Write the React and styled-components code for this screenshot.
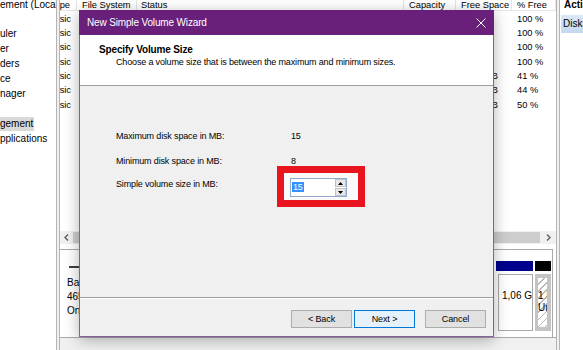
import React from 'react';
import styled, { createGlobalStyle } from 'styled-components';

const GlobalStyle = createGlobalStyle`
  html, body {
    margin: 0;
    padding: 0;
  }
  body {
    width: 583px;
    height: 350px;
    overflow: hidden;
    background: #fff;
    font-family: "Liberation Sans", Arial, sans-serif;
  }
`;

const treeItems = [
  { text: 'ement (Local' },
  { text: '' },
  { text: 'uler' },
  { text: 'er' },
  { text: 'ders' },
  { text: 'ce' },
  { text: 'nager' },
  { text: '' },
  { text: 'gement', selected: true },
  { text: 'pplications' },
];

const columns = [
  { key: 'type', title: 'Type', width: 17, align: 'end', pl: 0, pr: 6 },
  { key: 'fs', title: 'File System', width: 60, pl: 5 },
  { key: 'status', title: 'Status', width: 267, pl: 4 },
  { key: 'capacity', title: 'Capacity', width: 52, pl: 5 },
  { key: 'free', title: 'Free Space', width: 56, pl: 5 },
  { key: 'pct', title: '% Free', width: 44, pl: 5 },
];

const volumes = [
  { type: 'Basic', fs: 'NTFS', status: 'Healthy (System, Active, Primary Partition)', capacity: '500 MB', free: '', pct: '100 %' },
  { type: 'Basic', fs: 'NTFS', status: 'Healthy (Primary Partition)', capacity: '450 MB', free: '', pct: '100 %' },
  { type: 'Basic', fs: 'NTFS', status: 'Healthy (Primary Partition)', capacity: '8 MB', free: '', pct: '100 %' },
  { type: 'Basic', fs: 'NTFS', status: 'Healthy (Primary Partition)', capacity: '15 MB', free: '', pct: '100 %' },
  { type: 'Basic', fs: 'NTFS', status: 'Healthy (Boot, Page File, Crash Dump, Primary Partition)', capacity: '97,66 GB', free: '40,12 GB', pct: '41 %' },
  { type: 'Basic', fs: 'NTFS', status: 'Healthy (Primary Partition)', capacity: '183,59 GB', free: '80,90 GB', pct: '44 %' },
  { type: 'Basic', fs: 'NTFS', status: 'Healthy (Primary Partition)', capacity: '183,59 GB', free: '91,80 GB', pct: '50 %' },
];

/* ---------- background console ---------- */

const Screen = styled.div`
  position: relative;
  display: flex;
  width: 583px;
  height: 350px;
  overflow: hidden;
  background: #fff;
  color: #000;
`;

const Tree = styled.div`
  flex: 0 0 57px;
  box-sizing: border-box;
  border-right: 1px solid #b4b4b4;
  overflow: hidden;
  font-size: 10px;
`;

const TreeList = styled.div`
  margin-top: -2.45px;
`;

const TreeItem = styled.div`
  height: 14.9px;
  line-height: 14.9px;
  white-space: nowrap;
`;

const TreeLabel = styled.span`
  display: inline-block;
  line-height: 14.3px;
  padding-right: 1px;
  background: ${p => (p.$selected ? '#d9d9d9' : 'transparent')};
`;

const Splitter = styled.div`
  flex: 0 0 2px;
  background: #f0f0f0;
`;

const Middle = styled.div`
  flex: 0 0 498px;
  box-sizing: border-box;
  border-left: 1px solid #b4b4b4;
  border-right: 1px solid #b4b4b4;
  display: flex;
  flex-direction: column;
  font-size: 9.3px;
`;

const HeaderRow = styled.div`
  display: flex;
  height: 11px;
  box-sizing: border-box;
  border-bottom: 1px solid #e5e5e5;
  line-height: 10px;
`;

const Cell = styled.div`
  flex: 0 0 ${p => p.$w}px;
  box-sizing: border-box;
  display: flex;
  justify-content: ${p => (p.$align === 'end' ? 'flex-end' : 'flex-start')};
  padding: 0 ${p => p.$pr || 0}px 0 ${p => p.$pl || 0}px;
  overflow: hidden;
  white-space: nowrap;
`;

const HeaderCell = styled(Cell)`
  border-right: 1px solid #e5e5e5;
`;

const Rows = styled.div`
  height: 220px;
  padding-top: 0.6px;
  box-sizing: border-box;
  overflow: hidden;
`;

const Row = styled.div`
  display: flex;
  height: 14.33px;
  line-height: 14.33px;
`;

const HScroll = styled.div`
  display: flex;
  height: 13px;
  background: #f0f0f0;
`;

const ScrollArrow = styled.div`
  flex: 0 0 ${p => p.$w}px;
  display: flex;
  align-items: center;
  justify-content: center;
`;

const ScrollThumb = styled.div`
  flex: 1;
  margin: 1px 0;
  background: #cdcdcd;
`;

const PaneGap = styled.div`
  height: 5px;
`;

const LowerPane = styled.div`
  height: 88px;
  box-sizing: border-box;
  margin-right: 3px;
  border-top: 1px solid #a9a9a9;
  border-right: 1px solid #a9a9a9;
  padding-top: 11px;
  display: flex;
  font-size: 10px;
`;

const DiskLabel = styled.div`
  flex: 0 0 70px;
  box-sizing: border-box;
  padding: 5px 0 0 7px;
`;

const DiskIcon = styled.div`
  width: 11px;
  height: 2px;
  margin-left: 2px;
  background: #404040;
`;

const DiskLines = styled.div`
  margin-top: 8px;
  line-height: 14px;
  white-space: nowrap;
  overflow: hidden;
`;

const Partitions = styled.div`
  flex: 1;
  min-width: 0;
  display: flex;
  gap: 2px;
  padding-right: 1px;
`;

const Partition = styled.div`
  flex: ${p => (p.$w ? `0 0 ${p.$w}px` : '1 1 0')};
  min-width: 0;
  overflow: hidden;
  display: flex;
  flex-direction: column;
`;

const PartitionBar = styled.div`
  height: 10px;
  flex-shrink: 0;
  background: ${p => p.$color};
`;

const PartitionBody = styled.div`
  height: 57px;
  margin-top: 3px;
  box-sizing: border-box;
  overflow: hidden;
  white-space: nowrap;
  line-height: 12px;
  border: ${p => (p.$unallocated ? '4px solid #c4c4c4' : '1px solid #a8a8a8')};
  border-left-width: ${p => (p.$unallocated ? 3 : 1)}px;
  margin-left: ${p => (p.$unallocated ? 0 : 2)}px;
  padding: ${p => (p.$unallocated ? '12px 0 0 0' : '15px 0 0 3px')};
  background: ${p =>
    p.$unallocated
      ? 'repeating-linear-gradient(135deg, #fff 0 4px, #b8b8b8 4px 5px)'
      : '#fff'};
`;

const Legend = styled.div`
  flex: 1;
  border-top: 1px solid #a9a9a9;
  background: #f0f0f0;
`;

const ActionPanel = styled.div`
  flex: 0 0 24px;
  box-sizing: border-box;
  border-left: 1px solid #b4b4b4;
  overflow: hidden;
  font-size: 10px;
  white-space: nowrap;
`;

const ActionHeader = styled.div`
  height: 11px;
  line-height: 10px;
  padding-left: 4px;
  font-weight: bold;
`;

const ActionItem = styled.div`
  margin: 4px 0 0 1px;
  height: 18px;
  line-height: 18px;
  padding-left: 2px;
  background: linear-gradient(#dbe8f6, #c3d8ef);
`;

/* ---------- wizard dialog ---------- */

const Dialog = styled.div`
  position: absolute;
  left: 79px;
  top: 10px;
  width: 415px;
  height: 327px;
  box-sizing: border-box;
  border: 1px solid #86609a;
  border-top: none;
  display: flex;
  flex-direction: column;
  background: #f0f0f0;
  box-shadow: 0 3px 14px rgba(0, 0, 0, 0.3);
  color: #000;
`;

const TitleBar = styled.div`
  height: 25px;
  flex-shrink: 0;
  margin: 0 -1px;
  display: flex;
  align-items: center;
  justify-content: space-between;
  padding: 0 8px 0 8px;
  background: #69207b;
  color: #fff;
  font-size: 10px;
  letter-spacing: -0.15px;
`;

const WizardHeader = styled.div`
  height: 51px;
  flex-shrink: 0;
  box-sizing: border-box;
  border-bottom: 1px solid #a0a0a0;
  background: #fff;
  padding: 9px 0 0 19px;
  line-height: 12px;
`;

const HeaderTitle = styled.div`
  font-size: 10px;
  font-weight: bold;
  letter-spacing: -0.15px;
`;

const HeaderText = styled.div`
  margin-left: 17px;
  font-size: 9px;
  letter-spacing: -0.16px;
`;

const WizardBody = styled.div`
  height: 211px;
  flex-shrink: 0;
  box-sizing: border-box;
  padding: 44px 0 0 36px;
  display: flex;
  flex-direction: column;
  font-size: 9px;
  letter-spacing: -0.15px;
`;

const InfoRow = styled.div`
  display: grid;
  grid-template-columns: 161px auto;
  align-items: start;
  height: ${p => p.$h}px;
  margin-top: ${p => p.$mt}px;
  line-height: 12px;
`;

const InfoLabel = styled.div`
  padding-top: ${p => p.$pt || 0}px;
`;

const InfoValue = styled.div`
  padding-left: 14px;
`;

const Highlight = styled.div`
  justify-self: start;
  border: 7px solid #e8141e;
  background: #fafafa;
  padding: 5px 11px 3px 6px;
`;

const SpinBox = styled.div`
  display: flex;
  width: 57px;
  height: 19px;
  box-sizing: border-box;
  border: 1px solid #8fa9cf;
  background: #fff;
`;

const SpinText = styled.div`
  flex: 1;
  padding: 2px 0 0 1px;
`;

const Selected = styled.span`
  display: inline-block;
  line-height: 10px;
  padding: 0 1px;
  background: #3390ff;
  color: #fff;
`;

const Spinner = styled.div`
  flex: 0 0 11px;
  display: flex;
  flex-direction: column;
  gap: 1px;
`;

const SpinButton = styled.div`
  flex: 1;
  display: flex;
  align-items: center;
  justify-content: center;
  box-sizing: border-box;
  border: 1px solid #c2c2c2;
  background: #e8e8e8;
`;

const Footer = styled.div`
  flex: 1;
  box-sizing: border-box;
  border-top: 1px solid #a0a0a0;
  box-shadow: inset 0 1px 0 #fff;
  padding: 12px 7px 0 0;
  display: flex;
  justify-content: flex-end;
  align-items: flex-start;
`;

const Button = styled.div`
  width: 61px;
  height: 18px;
  box-sizing: border-box;
  margin-left: ${p => p.$ml || 0}px;
  display: flex;
  align-items: center;
  justify-content: center;
  border: 1px solid ${p => (p.$default ? '#0078d7' : '#adadad')};
  background: ${p => (p.$default ? '#e5f1fb' : '#e1e1e1')};
  font-size: 9px;
  letter-spacing: -0.1px;
`;

const CloseIcon = () => (
  <svg width="10" height="10" viewBox="0 0 10 10">
    <path d="M0.5 0.5 L9.5 9.5 M9.5 0.5 L0.5 9.5" stroke="#fff" strokeWidth="1" fill="none" />
  </svg>
);

const Chevron = ({ dir }) => (
  <svg width="5" height="7" viewBox="0 0 5 7">
    <path
      d={dir === 'left' ? 'M4 0.5 L1 3.5 L4 6.5' : 'M1 0.5 L4 3.5 L1 6.5'}
      stroke="#606060"
      strokeWidth="1.4"
      fill="none"
    />
  </svg>
);

const Triangle = ({ up }) => (
  <svg width="5" height="3" viewBox="0 0 5 3">
    <path d={up ? 'M0 3 L2.5 0 L5 3 Z' : 'M0 0 L2.5 3 L5 0 Z'} fill="#000" />
  </svg>
);

const App = () => {
  return (
    <>
      <GlobalStyle />
      <Screen>
        <Tree>
          <TreeList>
            {treeItems.map((item, i) => (
              <TreeItem key={i}>
                <TreeLabel $selected={item.selected}>{item.text}</TreeLabel>
              </TreeItem>
            ))}
          </TreeList>
        </Tree>
        <Splitter />
        <Middle>
          <HeaderRow>
            {columns.map(c => (
              <HeaderCell key={c.key} $w={c.width} $align={c.align} $pl={c.pl} $pr={c.pr}>
                {c.title}
              </HeaderCell>
            ))}
          </HeaderRow>
          <Rows>
            {volumes.map((v, i) => (
              <Row key={i}>
                {columns.map(c => (
                  <Cell
                    key={c.key}
                    $w={c.width}
                    $align={c.key === 'free' ? 'end' : c.align}
                    $pl={c.key === 'free' ? 0 : c.pl}
                    $pr={c.key === 'free' ? 14 : c.pr}
                  >
                    {v[c.key]}
                  </Cell>
                ))}
              </Row>
            ))}
          </Rows>
          <HScroll>
            <ScrollArrow $w={13}>
              <Chevron dir="left" />
            </ScrollArrow>
            <ScrollThumb />
            <ScrollArrow $w={16}>
              <Chevron dir="right" />
            </ScrollArrow>
          </HScroll>
          <PaneGap />
          <LowerPane>
            <DiskLabel>
              <DiskIcon />
              <DiskLines>
                <div>Basic</div>
                <div>465,76 GB</div>
                <div>Online</div>
              </DiskLines>
            </DiskLabel>
            <Partitions>
              <Partition>
                <PartitionBar $color="#00008c" />
                <PartitionBody>Healthy (Primary Partition)</PartitionBody>
              </Partition>
              <Partition $w={37}>
                <PartitionBar $color="#00008c" />
                <PartitionBody>1,06 GB</PartitionBody>
              </Partition>
              <Partition $w={16}>
                <PartitionBar $color="#000" />
                <PartitionBody $unallocated>
                  <div>1 MB</div>
                  <div>Unallocated</div>
                </PartitionBody>
              </Partition>
            </Partitions>
          </LowerPane>
          <Legend />
        </Middle>
        <Splitter />
        <ActionPanel>
          <ActionHeader>Actions</ActionHeader>
          <ActionItem>Disk Management</ActionItem>
        </ActionPanel>

        <Dialog>
          <TitleBar>
            <span>New Simple Volume Wizard</span>
            <CloseIcon />
          </TitleBar>
          <WizardHeader>
            <HeaderTitle>Specify Volume Size</HeaderTitle>
            <HeaderText>Choose a volume size that is between the maximum and minimum sizes.</HeaderText>
          </WizardHeader>
          <WizardBody>
            <InfoRow $h={12} $mt={0}>
              <InfoLabel>Maximum disk space in MB:</InfoLabel>
              <InfoValue>15</InfoValue>
            </InfoRow>
            <InfoRow $h={12} $mt={13}>
              <InfoLabel>Minimum disk space in MB:</InfoLabel>
              <InfoValue>8</InfoValue>
            </InfoRow>
            <InfoRow $h={41} $mt={-1}>
              <InfoLabel $pt={12}>Simple volume size in MB:</InfoLabel>
              <Highlight>
                <SpinBox>
                  <SpinText>
                    <Selected>15</Selected>
                  </SpinText>
                  <Spinner>
                    <SpinButton>
                      <Triangle up />
                    </SpinButton>
                    <SpinButton>
                      <Triangle />
                    </SpinButton>
                  </Spinner>
                </SpinBox>
              </Highlight>
            </InfoRow>
          </WizardBody>
          <Footer>
            <Button>&lt; Back</Button>
            <Button $default $ml={2}>Next &gt;</Button>
            <Button $ml={10}>Cancel</Button>
          </Footer>
        </Dialog>
      </Screen>
    </>
  );
};

export default App;
